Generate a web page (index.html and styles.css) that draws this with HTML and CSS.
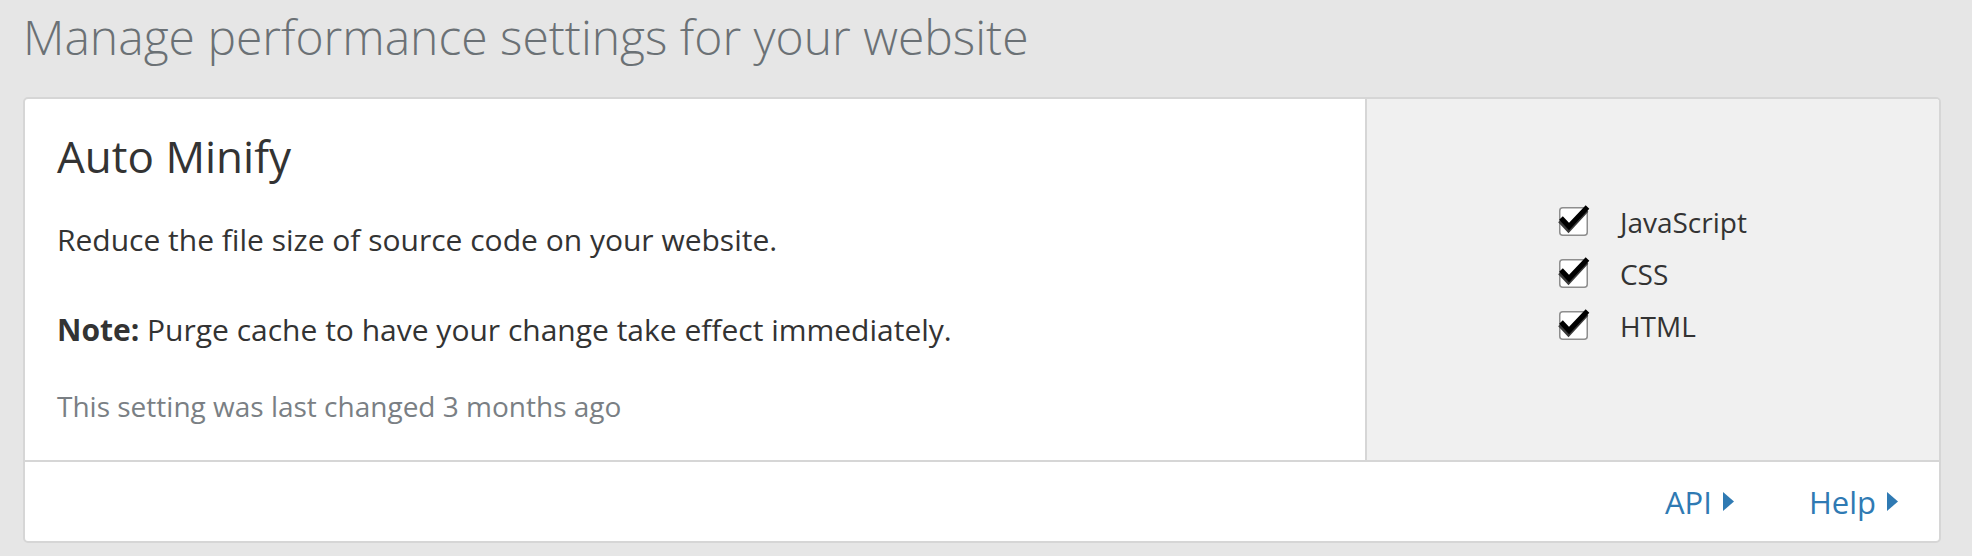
FILE: index.html
```html
<!DOCTYPE html>
<html lang="en">
<head>
<meta charset="utf-8">
<title>Performance settings</title>
<link rel="stylesheet" href="styles.css">
</head>
<body>
<main class="page">
  <h1 class="page-title">Manage performance settings for your website</h1>
  <section class="card">
    <div class="card-body">
      <div class="card-main">
        <h2 class="card-title">Auto Minify</h2>
        <p class="desc">Reduce the file size of source code on your website.</p>
        <p class="desc note"><strong>Note:</strong> Purge cache to have your change take effect immediately.</p>
        <p class="meta">This setting was last changed 3 months ago</p>
      </div>
      <div class="card-side">
        <ul class="checks">
          <li class="check">
            <svg class="cb" width="30" height="30" viewBox="0 0 30 30" aria-hidden="true">
              <rect x="0.75" y="0.75" width="27.5" height="27.5" rx="3" fill="#fff" stroke="#8e8e8e" stroke-width="1.5"/>
              <polyline points="1,13.5 9.5,22.5 27.5,3" fill="none" stroke="#3c3c3c" stroke-width="5" stroke-linejoin="miter"/>
              <polyline points="2,11 10,19.5 28.5,0" fill="none" stroke="#000" stroke-width="5" stroke-linejoin="miter"/>
            </svg>
            <span>JavaScript</span>
          </li>
          <li class="check">
            <svg class="cb" width="30" height="30" viewBox="0 0 30 30" aria-hidden="true">
              <rect x="0.75" y="0.75" width="27.5" height="27.5" rx="3" fill="#fff" stroke="#8e8e8e" stroke-width="1.5"/>
              <polyline points="1,13.5 9.5,22.5 27.5,3" fill="none" stroke="#3c3c3c" stroke-width="5" stroke-linejoin="miter"/>
              <polyline points="2,11 10,19.5 28.5,0" fill="none" stroke="#000" stroke-width="5" stroke-linejoin="miter"/>
            </svg>
            <span>CSS</span>
          </li>
          <li class="check">
            <svg class="cb" width="30" height="30" viewBox="0 0 30 30" aria-hidden="true">
              <rect x="0.75" y="0.75" width="27.5" height="27.5" rx="3" fill="#fff" stroke="#8e8e8e" stroke-width="1.5"/>
              <polyline points="1,13.5 9.5,22.5 27.5,3" fill="none" stroke="#3c3c3c" stroke-width="5" stroke-linejoin="miter"/>
              <polyline points="2,11 10,19.5 28.5,0" fill="none" stroke="#000" stroke-width="5" stroke-linejoin="miter"/>
            </svg>
            <span>HTML</span>
          </li>
        </ul>
      </div>
    </div>
    <footer class="card-footer">
      <a class="link" href="#">API<svg class="caret" width="11" height="19" viewBox="0 0 11 19" aria-hidden="true"><polygon points="0,0 11,9.5 0,19" fill="currentColor"/></svg></a>
      <a class="link" href="#">Help<svg class="caret" width="11" height="19" viewBox="0 0 11 19" aria-hidden="true"><polygon points="0,0 11,9.5 0,19" fill="currentColor"/></svg></a>
    </footer>
  </section>
</main>
</body>
</html>
```

FILE: styles.css
```css
* { box-sizing: border-box; }

html, body {
  margin: 0;
  padding: 0;
  background: #e6e6e6;
}

body {
  font-family: "Open Sans", "Noto Sans", "Liberation Sans", sans-serif;
  color: #333;
}

.page {
  padding: 8px 31px 0 23px;
}

.page-title {
  margin: 0 0 32px 0;
  font-size: 48px;
  line-height: 57px;
  font-weight: 300;
  color: #6b7175;
  letter-spacing: 0;
}

.card {
  background: #fff;
  border: 2px solid #d6d6d6;
  border-radius: 5px;
  overflow: hidden;
}

.card-body {
  display: flex;
  border-bottom: 2px solid #d6d6d6;
}

.card-main {
  flex: 0 0 70%;
  padding: 31px 30px 36px 32px;
}

.card-side {
  flex: 1 1 auto;
  background: #f0f0f0;
  border-left: 2px solid #d6d6d6;
  display: flex;
  align-items: center;
  justify-content: center;
  padding-bottom: 11px;
}

.card-title {
  margin: 0;
  font-size: 44px;
  line-height: 52px;
  font-weight: 400;
  color: #333;
}

.desc {
  margin: 38px 0 0 0;
  font-size: 30px;
  line-height: 40px;
  color: #333;
}

.desc.note {
  margin-top: 50px;
}

.desc strong {
  font-weight: 700;
}

.meta {
  margin: 38px 0 0 0;
  font-size: 28px;
  line-height: 36px;
  color: #7a7f84;
}

.checks {
  list-style: none;
  margin: 0;
  padding: 0;
  display: flex;
  flex-direction: column;
  gap: 22px;
}

.check {
  display: flex;
  align-items: center;
  gap: 31px;
  height: 30px;
  font-size: 28px;
  color: #333;
}

.cb {
  display: block;
  overflow: visible;
  flex: 0 0 auto;
}

.card-footer {
  height: 79px;
  display: flex;
  justify-content: flex-end;
  align-items: center;
  gap: 75px;
  padding-right: 41px;
}

.link {
  display: inline-flex;
  align-items: center;
  gap: 11px;
  font-size: 31px;
  color: #2f7ab3;
  text-decoration: none;
}

.caret {
  display: block;
}
```
